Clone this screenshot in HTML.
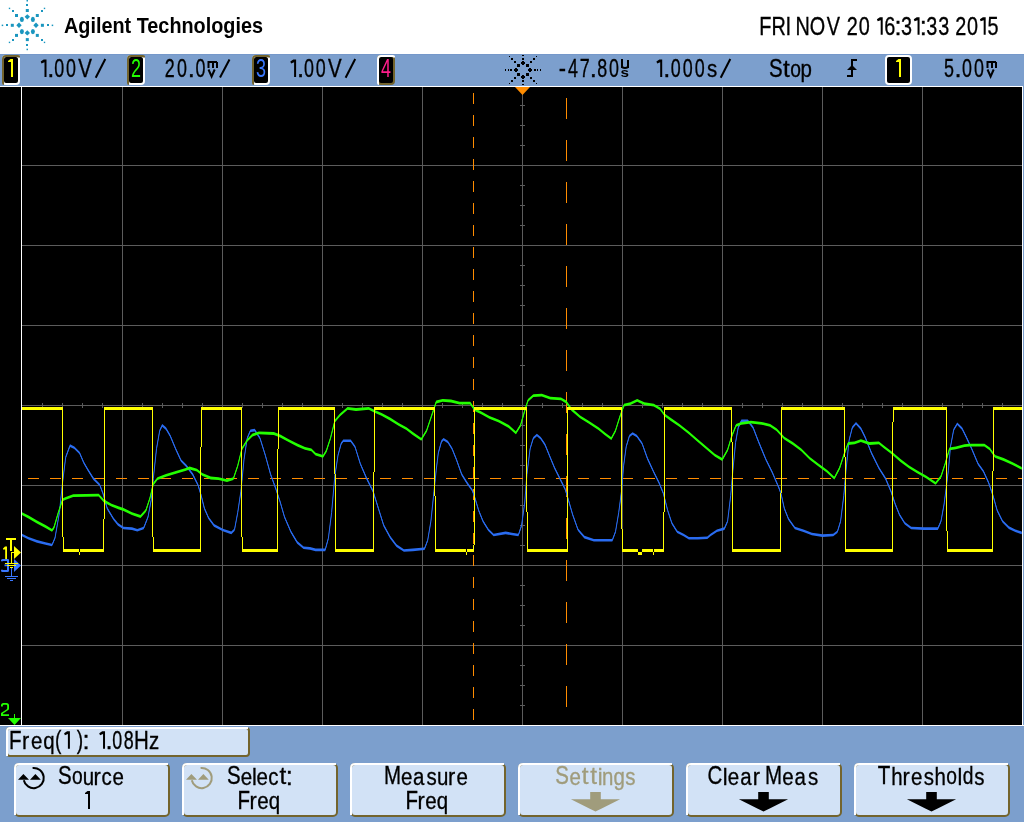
<!DOCTYPE html>
<html><head><meta charset="utf-8">
<style>
html,body{margin:0;padding:0;}
body{width:1024px;height:822px;position:relative;overflow:hidden;background:#7c9fcd;font-family:"Liberation Sans",sans-serif;}
svg{position:absolute;left:0;top:0;will-change:transform;}
text{font-family:"Liberation Sans",sans-serif;}
</style></head><body>
<svg width="1024" height="822" viewBox="0 0 1024 822">
 <!-- header -->
 <rect x="0" y="0" width="1024" height="54" fill="#fff"/>
 <g id="logo" fill="#1a96bf">
  <!-- vertical -->
  <rect x="26.5" y="0" width="1.5" height="1.5"/>
  <rect x="26" y="4" width="2" height="2"/>
  <rect x="25.8" y="9" width="3" height="3"/>
  <path d="M27.3 14.2L30 16.8L27.3 19.6L24.6 16.8Z"/>
  <path d="M27.3 30.2L30 32.9L27.3 35.6L24.6 32.9Z"/>
  <rect x="25.8" y="38.1" width="3" height="3"/>
  <rect x="26" y="44" width="2" height="2"/>
  <rect x="26.5" y="48.7" width="1.5" height="1.5"/>
  <!-- horizontal -->
  <path d="M16.3 25.3L19 22.6L21.7 25.3L19 28Z"/>
  <path d="M33.3 25.3L36 22.6L38.7 25.3L36 28Z"/>
  <rect x="10.8" y="23.8" width="3" height="3"/>
  <rect x="6" y="24" width="2" height="2"/>
  <rect x="1.7" y="24.6" width="1.5" height="1.5"/>
  <rect x="40.9" y="23.8" width="3" height="3"/>
  <rect x="47" y="24" width="2" height="2"/>
  <rect x="51.7" y="24.6" width="1.5" height="1.5"/>
  <!-- ovals -->
  <ellipse cx="21.9" cy="19.4" rx="2" ry="2.6"/>
  <ellipse cx="32.9" cy="19.4" rx="2" ry="2.6"/>
  <ellipse cx="21.9" cy="31.6" rx="2" ry="2.6"/>
  <ellipse cx="32.9" cy="31.6" rx="2" ry="2.6"/>
  <!-- diagonals -->
  <rect x="15" y="14" width="3" height="3"/><rect x="12" y="10" width="2" height="2"/><rect x="8.8" y="7.7" width="1.4" height="1.4"/>
  <rect x="35.8" y="14" width="3" height="3"/><rect x="41" y="10" width="2" height="2"/><rect x="43.8" y="7.7" width="1.4" height="1.4"/>
  <rect x="15" y="33.9" width="3" height="3"/><rect x="12" y="39" width="2" height="2"/><rect x="8.8" y="41.7" width="1.4" height="1.4"/>
  <rect x="35.8" y="33.9" width="3" height="3"/><rect x="41" y="39" width="2" height="2"/><rect x="43.8" y="41.7" width="1.4" height="1.4"/>
 </g>
 <text x="64" y="32.7" font-size="21.8" font-weight="bold" textLength="199" lengthAdjust="spacingAndGlyphs">Agilent Technologies</text>

 <!-- top bar -->
 <rect x="0" y="54" width="1024" height="32" fill="#7c9fcd"/>
 <rect x="0" y="54" width="1024" height="1" fill="#7598ca"/>
 <g id="topbar">
 <g stroke-width="2">
  <rect x="3" y="56" width="16" height="28" rx="3" fill="#000" stroke="#fff"/>
  <path d="M19 57.5 V56.5 Q19 56 18 56 H6 Q3 56 3 59 V83 Q3 84 4 84" fill="none" stroke="#73642d"/>
  <rect x="128" y="56" width="16" height="28" rx="3" fill="#000" stroke="#fff"/>
  <path d="M144 57.5 V56.5 Q144 56 143 56 H131 Q128 56 128 59 V83 Q128 84 129 84" fill="none" stroke="#73642d"/>
  <rect x="253" y="56" width="16" height="28" rx="3" fill="#000" stroke="#fff"/>
  <path d="M269 57.5 V56.5 Q269 56 268 56 H256 Q253 56 253 59 V83 Q253 84 254 84" fill="none" stroke="#73642d"/>
  <rect x="378" y="56" width="16" height="28" rx="3" fill="#000" stroke="#73642d"/>
  <path d="M394 57.5 V56.5 Q394 56 393 56 H381 Q378 56 378 59 V83 Q378 84 379 84" fill="none" stroke="#fff"/>
  <rect x="886" y="56" width="25" height="28" rx="3" fill="#000" stroke="#fff"/>
 </g>
 <path d="M8 61L10.5 59H13V77H11V62H8Z" fill="#ffff00"/>
 <text x="131" y="77" font-size="25" fill="#22ff00" textLength="10" lengthAdjust="spacingAndGlyphs">2</text>
 <text x="256" y="77" font-size="25" fill="#3a78ff" textLength="10" lengthAdjust="spacingAndGlyphs">3</text>
 <text x="381" y="77" font-size="25" fill="#ff1e8c" textLength="10" lengthAdjust="spacingAndGlyphs">4</text>
 <path d="M896 61L898.5 59H901V77H899V62H896Z" fill="#ffff00"/>
 <path d="M208.5 68V62H217M213 62V68M217 62V68" fill="none" stroke="#000" stroke-width="2"/>
 <path d="M208.5 69.5L211.6 76.5L214.7 69.5" fill="none" stroke="#000" stroke-width="2"/>
 <path d="M220 77.5L229.5 59.5" fill="none" stroke="#000" stroke-width="2"/>
 <path d="M622 59V68M622 66Q622 68 625 68Q628 68 628 66M628 60V68" fill="none" stroke="#000" stroke-width="2"/>
 <text x="620.5" y="77" font-size="13" font-weight="bold" textLength="8.5" lengthAdjust="spacingAndGlyphs">s</text>
 <path d="M987.5 68V62H996M992 62V68M996 62V68" fill="none" stroke="#000" stroke-width="2"/>
 <path d="M987.5 69.5L990.6 76.5L993.7 69.5" fill="none" stroke="#000" stroke-width="2"/>

 <g fill="#000">
  <path d="M851 59H857V61H853V77H847V75H851Z"/>
  <path d="M847 70H857L852 65Z"/>
 </g>
 <g id="trigstar" fill="#000" transform="translate(500,54)">
  <rect x="22" y="1" width="2" height="1"/>
  <rect x="22" y="4" width="2" height="2"/>
  <path d="M22 7H24V8H25V10H24V11H22V10H21V8H22Z"/>
  <path d="M22 21H24V22H25V24H24V25H22V24H21V22H22Z"/>
  <rect x="22" y="26" width="2" height="2"/>
  <rect x="22" y="30" width="2" height="1"/>
  <path d="M15 14H17V15H18V17H17V18H15V17H14V15H15Z"/>
  <path d="M29 14H31V15H32V17H31V18H29V17H28V15H29Z"/>
  <rect x="10" y="15" width="2" height="2"/>
  <rect x="8" y="15" width="1" height="2"/>
  <rect x="5" y="15" width="1" height="2"/>
  <rect x="34" y="15" width="2" height="2"/>
  <rect x="37" y="15" width="1" height="2"/>
  <rect x="40" y="15" width="1" height="2"/>
  <rect x="17" y="10" width="3" height="3"/>
  <rect x="26" y="10" width="3" height="3"/>
  <rect x="17" y="19" width="3" height="3"/>
  <rect x="26" y="19" width="3" height="3"/>
  <rect x="14" y="7" width="2" height="2"/>
  <rect x="30" y="7" width="2" height="2"/>
  <rect x="14" y="23" width="2" height="2"/>
  <rect x="30" y="23" width="2" height="2"/>
  <rect x="11" y="4" width="2" height="2"/>
  <rect x="33" y="4" width="2" height="2"/>
  <rect x="11" y="26" width="2" height="2"/>
  <rect x="33" y="26" width="2" height="2"/>
  <rect x="9" y="2" width="1" height="1"/>
  <rect x="36" y="2" width="1" height="1"/>
  <rect x="9" y="29" width="1" height="1"/>
  <rect x="36" y="29" width="1" height="1"/>
 </g>
<!--TT-->
</g>


 <!-- screen -->
 <rect x="0" y="86" width="1023" height="640" fill="#000"/>
 <g id="grid" stroke="#5c5c5c" stroke-width="1" shape-rendering="crispEdges">
  <path d="M122.5 87V725M222.5 87V725M322.5 87V725M422.5 87V725M522.5 87V725M622.5 87V725M722.5 87V725M822.5 87V725M922.5 87V725"/>
  <path d="M22 165.5H1022M22 245.5H1022M22 325.5H1022M22 405.5H1022M22 485.5H1022M22 565.5H1022M22 645.5H1022"/>
 </g>
 <g fill="#5c5c5c"><rect x="42" y="403" width="1" height="5"/><rect x="62" y="403" width="1" height="5"/><rect x="82" y="403" width="1" height="5"/><rect x="102" y="403" width="1" height="5"/><rect x="142" y="403" width="1" height="5"/><rect x="162" y="403" width="1" height="5"/><rect x="182" y="403" width="1" height="5"/><rect x="202" y="403" width="1" height="5"/><rect x="242" y="403" width="1" height="5"/><rect x="262" y="403" width="1" height="5"/><rect x="282" y="403" width="1" height="5"/><rect x="302" y="403" width="1" height="5"/><rect x="342" y="403" width="1" height="5"/><rect x="362" y="403" width="1" height="5"/><rect x="382" y="403" width="1" height="5"/><rect x="402" y="403" width="1" height="5"/><rect x="442" y="403" width="1" height="5"/><rect x="462" y="403" width="1" height="5"/><rect x="482" y="403" width="1" height="5"/><rect x="502" y="403" width="1" height="5"/><rect x="542" y="403" width="1" height="5"/><rect x="562" y="403" width="1" height="5"/><rect x="582" y="403" width="1" height="5"/><rect x="602" y="403" width="1" height="5"/><rect x="642" y="403" width="1" height="5"/><rect x="662" y="403" width="1" height="5"/><rect x="682" y="403" width="1" height="5"/><rect x="702" y="403" width="1" height="5"/><rect x="742" y="403" width="1" height="5"/><rect x="762" y="403" width="1" height="5"/><rect x="782" y="403" width="1" height="5"/><rect x="802" y="403" width="1" height="5"/><rect x="842" y="403" width="1" height="5"/><rect x="862" y="403" width="1" height="5"/><rect x="882" y="403" width="1" height="5"/><rect x="902" y="403" width="1" height="5"/><rect x="942" y="403" width="1" height="5"/><rect x="962" y="403" width="1" height="5"/><rect x="982" y="403" width="1" height="5"/><rect x="1002" y="403" width="1" height="5"/><rect x="520" y="105" width="5" height="1"/><rect x="520" y="125" width="5" height="1"/><rect x="520" y="145" width="5" height="1"/><rect x="520" y="185" width="5" height="1"/><rect x="520" y="205" width="5" height="1"/><rect x="520" y="225" width="5" height="1"/><rect x="520" y="265" width="5" height="1"/><rect x="520" y="285" width="5" height="1"/><rect x="520" y="305" width="5" height="1"/><rect x="520" y="345" width="5" height="1"/><rect x="520" y="365" width="5" height="1"/><rect x="520" y="385" width="5" height="1"/><rect x="520" y="425" width="5" height="1"/><rect x="520" y="445" width="5" height="1"/><rect x="520" y="465" width="5" height="1"/><rect x="520" y="505" width="5" height="1"/><rect x="520" y="525" width="5" height="1"/><rect x="520" y="545" width="5" height="1"/><rect x="520" y="585" width="5" height="1"/><rect x="520" y="605" width="5" height="1"/><rect x="520" y="625" width="5" height="1"/><rect x="520" y="665" width="5" height="1"/><rect x="520" y="685" width="5" height="1"/><rect x="520" y="705" width="5" height="1"/></g>
 <rect x="0" y="86" width="1023" height="1" fill="#fff"/>
 <rect x="0" y="725" width="1024" height="1" fill="#fff"/>
 <rect x="21" y="86" width="1" height="640" fill="#fff"/>
 <rect x="1022" y="86" width="1" height="640" fill="#fff"/>
 <g fill="#ff8c00"><rect x="473" y="93" width="1" height="11"/><rect x="473" y="115" width="1" height="11"/><rect x="473" y="137" width="1" height="11"/><rect x="473" y="159" width="1" height="11"/><rect x="473" y="181" width="1" height="11"/><rect x="473" y="203" width="1" height="11"/><rect x="473" y="225" width="1" height="11"/><rect x="473" y="247" width="1" height="11"/><rect x="473" y="269" width="1" height="11"/><rect x="473" y="291" width="1" height="11"/><rect x="473" y="313" width="1" height="11"/><rect x="473" y="335" width="1" height="11"/><rect x="473" y="357" width="1" height="11"/><rect x="473" y="379" width="1" height="11"/><rect x="473" y="401" width="1" height="11"/><rect x="473" y="423" width="1" height="11"/><rect x="473" y="445" width="1" height="11"/><rect x="473" y="467" width="1" height="11"/><rect x="473" y="489" width="1" height="11"/><rect x="473" y="511" width="1" height="11"/><rect x="473" y="533" width="1" height="11"/><rect x="473" y="555" width="1" height="11"/><rect x="473" y="577" width="1" height="11"/><rect x="473" y="599" width="1" height="11"/><rect x="473" y="621" width="1" height="11"/><rect x="473" y="643" width="1" height="11"/><rect x="473" y="665" width="1" height="11"/><rect x="473" y="687" width="1" height="11"/><rect x="473" y="709" width="1" height="11"/><rect x="566" y="98" width="1" height="21"/><rect x="566" y="140" width="1" height="21"/><rect x="566" y="182" width="1" height="21"/><rect x="566" y="224" width="1" height="21"/><rect x="566" y="266" width="1" height="21"/><rect x="566" y="308" width="1" height="21"/><rect x="566" y="350" width="1" height="21"/><rect x="566" y="392" width="1" height="21"/><rect x="566" y="434" width="1" height="21"/><rect x="566" y="476" width="1" height="21"/><rect x="566" y="518" width="1" height="21"/><rect x="566" y="560" width="1" height="21"/><rect x="566" y="602" width="1" height="21"/><rect x="566" y="644" width="1" height="21"/><rect x="566" y="686" width="1" height="21"/><rect x="28" y="478" width="11" height="1"/><rect x="50" y="478" width="11" height="1"/><rect x="72" y="478" width="11" height="1"/><rect x="94" y="478" width="11" height="1"/><rect x="116" y="478" width="11" height="1"/><rect x="138" y="478" width="11" height="1"/><rect x="160" y="478" width="11" height="1"/><rect x="182" y="478" width="11" height="1"/><rect x="204" y="478" width="11" height="1"/><rect x="226" y="478" width="11" height="1"/><rect x="248" y="478" width="11" height="1"/><rect x="270" y="478" width="11" height="1"/><rect x="292" y="478" width="11" height="1"/><rect x="314" y="478" width="11" height="1"/><rect x="336" y="478" width="11" height="1"/><rect x="358" y="478" width="11" height="1"/><rect x="380" y="478" width="11" height="1"/><rect x="402" y="478" width="11" height="1"/><rect x="424" y="478" width="11" height="1"/><rect x="446" y="478" width="11" height="1"/><rect x="468" y="478" width="11" height="1"/><rect x="490" y="478" width="11" height="1"/><rect x="512" y="478" width="11" height="1"/><rect x="534" y="478" width="11" height="1"/><rect x="556" y="478" width="11" height="1"/><rect x="578" y="478" width="11" height="1"/><rect x="600" y="478" width="11" height="1"/><rect x="622" y="478" width="11" height="1"/><rect x="644" y="478" width="11" height="1"/><rect x="666" y="478" width="11" height="1"/><rect x="688" y="478" width="11" height="1"/><rect x="710" y="478" width="11" height="1"/><rect x="732" y="478" width="11" height="1"/><rect x="754" y="478" width="11" height="1"/><rect x="776" y="478" width="11" height="1"/><rect x="798" y="478" width="11" height="1"/><rect x="820" y="478" width="11" height="1"/><rect x="842" y="478" width="11" height="1"/><rect x="864" y="478" width="11" height="1"/><rect x="886" y="478" width="11" height="1"/><rect x="908" y="478" width="11" height="1"/><rect x="930" y="478" width="11" height="1"/><rect x="952" y="478" width="11" height="1"/><rect x="974" y="478" width="11" height="1"/><rect x="996" y="478" width="11" height="1"/><rect x="1018" y="478" width="4" height="1"/><path d="M515 87H530L522.5 95Z"/></g>
 <polygon fill="#2a6cf0" points="22.0,533.7 28.5,536.9 37.0,540.1 45.5,542.2 52.0,543.7 55.0,536.7 59.4,511.4 62.5,481.6 65.7,456.0 70.0,444.3 74.3,446.5 79.6,451.7 83.8,461.4 88.0,468.7 93.4,477.3 99.8,483.7 103.0,492.2 107.2,507.1 113.6,517.7 118.0,523.1 123.5,526.7 132.0,527.3 137.3,529.0 143.7,526.7 148.0,515.7 151.2,498.7 153.3,477.3 156.5,447.5 159.7,429.4 162.2,424.1 166.0,427.3 170.3,434.7 175.6,447.5 181.0,459.2 186.3,464.6 192.7,473.1 198.0,483.7 201.2,494.3 204.4,507.1 208.6,516.7 214.0,524.1 222.8,528.7 231.3,531.6 234.5,528.4 237.7,511.4 240.9,490.1 244.0,458.2 247.2,436.9 250.4,429.4 254.7,428.8 260.0,436.9 265.3,453.9 270.6,473.1 276.0,488.0 280.2,500.7 284.5,515.7 290.9,530.5 297.2,541.1 303.6,546.5 310.0,547.1 315.6,548.6 325.2,548.6 328.4,536.9 331.6,511.4 334.8,475.2 338.0,453.9 341.2,442.2 343.3,439.4 350.7,439.4 355.0,445.4 360.3,462.4 366.7,477.3 373.1,490.1 378.4,507.1 383.7,524.1 390.1,535.8 396.5,544.3 403.9,549.2 412.8,548.6 424.5,547.5 427.7,539.0 430.9,519.9 434.0,490.1 436.2,468.8 438.3,451.7 441.5,440.1 443.6,438.0 447.9,440.7 452.1,447.5 456.4,458.2 461.7,473.1 467.0,481.6 472.3,489.0 475.5,498.6 478.7,509.2 483.0,519.9 488.3,528.4 493.6,533.7 505.6,531.6 512.0,532.7 518.4,533.7 521.6,524.1 524.8,500.7 526.9,473.1 530.1,447.5 533.3,436.9 536.9,433.7 540.7,436.9 545.0,443.3 549.3,453.9 554.6,466.7 559.9,477.3 565.2,488.0 568.4,498.6 572.7,513.5 578.0,528.4 584.4,535.8 593.9,539.0 612.3,539.0 615.5,530.5 618.7,511.4 621.5,490.1 623.6,464.6 626.2,445.4 629.4,434.7 632.6,432.2 636.8,434.7 642.1,442.2 647.4,457.1 653.8,470.9 659.1,481.6 663.4,492.2 667.7,509.2 671.9,522.0 677.2,530.5 683.6,533.7 688.9,536.9 697.8,536.9 707.3,536.5 710.5,533.7 716.9,529.4 724.4,527.3 727.6,519.9 730.7,494.3 732.9,468.8 735.6,441.1 738.2,426.3 741.4,419.4 747.8,419.4 753.1,426.3 758.4,440.1 765.9,458.2 772.2,470.9 778.6,485.8 781.0,492.2 784.3,507.1 788.5,517.7 794.9,526.7 803.4,529.4 811.9,532.7 822.6,534.3 833.2,533.7 837.4,530.5 840.6,519.9 843.8,494.3 846.0,468.8 849.1,439.0 852.3,426.3 856.0,422.0 860.9,427.3 865.1,435.8 871.5,451.8 878.9,466.7 885.6,477.3 891.0,490.1 895.2,502.8 899.5,513.5 904.8,522.0 911.2,526.7 923.9,527.3 937.8,527.3 941.0,519.9 944.1,502.8 946.3,485.8 948.4,468.8 950.5,445.4 953.7,428.4 957.3,422.4 962.1,427.3 966.3,435.8 971.7,447.5 978.0,462.4 983.4,469.9 988.7,481.6 993.0,494.3 997.2,509.2 1002.5,519.9 1008.9,526.3 1015.3,529.4 1021.7,531.6 1021.7,534.2 1015.3,532.0 1008.9,528.9 1002.5,522.5 997.2,511.8 993.0,496.9 988.7,484.2 983.4,472.5 978.0,465.0 971.7,450.1 966.3,438.4 962.1,429.9 957.3,425.0 953.7,431.0 950.5,448.0 948.4,471.4 946.3,488.4 944.1,505.4 941.0,522.5 937.8,529.9 923.9,529.9 911.2,529.3 904.8,524.6 899.5,516.1 895.2,505.4 891.0,492.7 885.6,479.9 878.9,469.3 871.5,454.4 865.1,438.4 860.9,429.9 856.0,424.6 852.3,428.9 849.1,441.6 846.0,471.4 843.8,496.9 840.6,522.5 837.4,533.1 833.2,536.3 822.6,536.9 811.9,535.3 803.4,532.0 794.9,529.3 788.5,520.3 784.3,509.7 781.0,494.8 778.6,488.4 772.2,473.5 765.9,460.8 758.4,442.7 753.1,428.9 747.8,422.0 741.4,422.0 738.2,428.9 735.6,443.7 732.9,471.4 730.7,496.9 727.6,522.5 724.4,529.9 716.9,532.0 710.5,536.3 707.3,539.1 697.8,539.5 688.9,539.5 683.6,536.3 677.2,533.1 671.9,524.6 667.7,511.8 663.4,494.8 659.1,484.2 653.8,473.5 647.4,459.7 642.1,444.8 636.8,437.3 632.6,434.8 629.4,437.3 626.2,448.0 623.6,467.2 621.5,492.7 618.7,514.0 615.5,533.1 612.3,541.6 593.9,541.6 584.4,538.4 578.0,531.0 572.7,516.1 568.4,501.2 565.2,490.6 559.9,479.9 554.6,469.3 549.3,456.5 545.0,445.9 540.7,439.5 536.9,436.3 533.3,439.5 530.1,450.1 526.9,475.7 524.8,503.3 521.6,526.7 518.4,536.3 512.0,535.3 505.6,534.2 493.6,536.3 488.3,531.0 483.0,522.5 478.7,511.8 475.5,501.2 472.3,491.6 467.0,484.2 461.7,475.7 456.4,460.8 452.1,450.1 447.9,443.3 443.6,440.6 441.5,442.7 438.3,454.3 436.2,471.4 434.0,492.7 430.9,522.5 427.7,541.6 424.5,550.1 412.8,551.2 403.9,551.8 396.5,546.9 390.1,538.4 383.7,526.7 378.4,509.7 373.1,492.7 366.7,479.9 360.3,465.0 355.0,448.0 350.7,442.0 343.3,442.0 341.2,444.8 338.0,456.5 334.8,477.8 331.6,514.0 328.4,539.5 325.2,551.2 315.6,551.2 310.0,549.7 303.6,549.1 297.2,543.7 290.9,533.1 284.5,518.3 280.2,503.3 276.0,490.6 270.6,475.7 265.3,456.5 260.0,439.5 254.7,431.4 250.4,432.0 247.2,439.5 244.0,460.8 240.9,492.7 237.7,514.0 234.5,531.0 231.3,534.2 222.8,531.3 214.0,526.7 208.6,519.3 204.4,509.7 201.2,496.9 198.0,486.3 192.7,475.7 186.3,467.2 181.0,461.8 175.6,450.1 170.3,437.3 166.0,429.9 162.2,426.7 159.7,432.0 156.5,450.1 153.3,479.9 151.2,501.3 148.0,518.3 143.7,529.3 137.3,531.6 132.0,529.9 123.5,529.3 118.0,525.7 113.6,520.3 107.2,509.7 103.0,494.8 99.8,486.3 93.4,479.9 88.0,471.3 83.8,464.0 79.6,454.3 74.3,449.1 70.0,446.9 65.7,458.6 62.5,484.2 59.4,514.0 55.0,539.3 52.0,546.3 45.5,544.8 37.0,542.7 28.5,539.5 22.0,536.3"/><polyline fill="none" stroke="#2a6cf0" stroke-width="1.0" stroke-linejoin="round" points="22.0,535.0 28.5,538.2 37.0,541.4 45.5,543.5 52.0,545.0 55.0,538.0 59.4,512.7 62.5,482.9 65.7,457.3 70.0,445.6 74.3,447.8 79.6,453.0 83.8,462.7 88.0,470.0 93.4,478.6 99.8,485.0 103.0,493.5 107.2,508.4 113.6,519.0 118.0,524.4 123.5,528.0 132.0,528.6 137.3,530.3 143.7,528.0 148.0,517.0 151.2,500.0 153.3,478.6 156.5,448.8 159.7,430.7 162.2,425.4 166.0,428.6 170.3,436.0 175.6,448.8 181.0,460.5 186.3,465.9 192.7,474.4 198.0,485.0 201.2,495.6 204.4,508.4 208.6,518.0 214.0,525.4 222.8,530.0 231.3,532.9 234.5,529.7 237.7,512.7 240.9,491.4 244.0,459.5 247.2,438.2 250.4,430.7 254.7,430.1 260.0,438.2 265.3,455.2 270.6,474.4 276.0,489.3 280.2,502.0 284.5,517.0 290.9,531.8 297.2,542.4 303.6,547.8 310.0,548.4 315.6,549.9 325.2,549.9 328.4,538.2 331.6,512.7 334.8,476.5 338.0,455.2 341.2,443.5 343.3,440.7 350.7,440.7 355.0,446.7 360.3,463.7 366.7,478.6 373.1,491.4 378.4,508.4 383.7,525.4 390.1,537.1 396.5,545.6 403.9,550.5 412.8,549.9 424.5,548.8 427.7,540.3 430.9,521.2 434.0,491.4 436.2,470.1 438.3,453.0 441.5,441.4 443.6,439.3 447.9,442.0 452.1,448.8 456.4,459.5 461.7,474.4 467.0,482.9 472.3,490.3 475.5,499.9 478.7,510.5 483.0,521.2 488.3,529.7 493.6,535.0 505.6,532.9 512.0,534.0 518.4,535.0 521.6,525.4 524.8,502.0 526.9,474.4 530.1,448.8 533.3,438.2 536.9,435.0 540.7,438.2 545.0,444.6 549.3,455.2 554.6,468.0 559.9,478.6 565.2,489.3 568.4,499.9 572.7,514.8 578.0,529.7 584.4,537.1 593.9,540.3 612.3,540.3 615.5,531.8 618.7,512.7 621.5,491.4 623.6,465.9 626.2,446.7 629.4,436.0 632.6,433.5 636.8,436.0 642.1,443.5 647.4,458.4 653.8,472.2 659.1,482.9 663.4,493.5 667.7,510.5 671.9,523.3 677.2,531.8 683.6,535.0 688.9,538.2 697.8,538.2 707.3,537.8 710.5,535.0 716.9,530.7 724.4,528.6 727.6,521.2 730.7,495.6 732.9,470.1 735.6,442.4 738.2,427.6 741.4,420.7 747.8,420.7 753.1,427.6 758.4,441.4 765.9,459.5 772.2,472.2 778.6,487.1 781.0,493.5 784.3,508.4 788.5,519.0 794.9,528.0 803.4,530.7 811.9,534.0 822.6,535.6 833.2,535.0 837.4,531.8 840.6,521.2 843.8,495.6 846.0,470.1 849.1,440.3 852.3,427.6 856.0,423.3 860.9,428.6 865.1,437.1 871.5,453.1 878.9,468.0 885.6,478.6 891.0,491.4 895.2,504.1 899.5,514.8 904.8,523.3 911.2,528.0 923.9,528.6 937.8,528.6 941.0,521.2 944.1,504.1 946.3,487.1 948.4,470.1 950.5,446.7 953.7,429.7 957.3,423.7 962.1,428.6 966.3,437.1 971.7,448.8 978.0,463.7 983.4,471.2 988.7,482.9 993.0,495.6 997.2,510.5 1002.5,521.2 1008.9,527.6 1015.3,530.7 1021.7,532.9"/>
<polygon fill="#24ff00" points="22.0,512.3 28.5,515.6 37.0,520.6 45.5,525.1 52.0,528.9 54.0,526.1 58.3,511.3 62.5,498.5 65.7,497.0 73.2,494.2 98.7,493.8 104.0,499.6 111.5,503.8 119.0,506.6 123.5,508.1 132.0,512.3 140.5,515.1 145.9,509.1 150.0,496.4 153.3,482.6 157.5,477.2 166.0,474.0 176.7,470.8 185.2,468.3 189.5,466.6 196.9,468.7 202.2,473.0 210.7,476.6 218.5,477.2 227.0,479.3 233.4,477.2 237.7,464.5 241.9,447.4 247.2,438.9 252.5,433.6 258.9,431.5 273.8,432.1 280.2,434.6 288.7,439.3 297.2,443.6 305.0,447.0 311.4,448.5 315.6,452.7 323.0,454.9 326.3,449.6 330.5,436.8 334.8,419.8 340.1,413.4 347.6,407.0 356.0,408.1 368.8,407.0 375.2,410.2 381.6,413.0 390.1,417.6 398.6,423.0 406.4,427.2 412.8,432.1 421.3,437.9 426.6,429.3 431.9,413.4 436.2,400.6 442.6,398.9 451.0,399.6 459.6,401.7 470.2,401.7 474.5,408.1 480.9,411.3 489.4,415.9 498.9,419.8 508.8,425.1 515.9,431.5 520.5,424.0 524.8,409.1 528.0,398.9 533.3,394.2 541.8,393.8 550.3,396.8 561.0,397.4 566.3,400.6 571.6,408.1 580.1,415.5 588.6,420.8 598.5,427.2 604.9,432.5 611.3,437.2 615.5,429.3 619.8,415.5 624.0,403.8 630.4,402.3 637.2,398.9 644.3,402.3 653.8,403.8 660.2,407.4 664.5,413.4 670.9,418.1 679.4,424.0 688.9,431.5 697.8,439.3 706.3,446.4 714.8,453.8 722.2,458.1 727.6,448.5 731.8,434.6 736.1,424.0 741.4,421.9 751.0,420.8 761.6,421.9 770.1,424.0 776.5,428.3 784.3,436.8 792.8,442.1 801.3,448.5 809.8,457.0 818.3,463.4 826.8,469.8 834.3,476.8 839.6,466.6 843.8,453.8 848.1,442.1 854.5,441.5 860.9,439.3 869.4,442.1 878.9,441.5 883.5,445.3 892.0,451.7 900.5,459.1 909.0,465.5 917.6,470.8 926.0,475.5 935.6,481.9 941.0,475.1 945.2,462.3 949.5,447.4 955.9,446.4 964.4,444.2 969.5,443.8 984.4,443.8 989.7,447.4 995.0,454.9 1003.6,458.1 1012.1,461.9 1021.7,467.0 1021.7,469.8 1012.1,464.7 1003.6,460.9 995.0,457.7 989.7,450.2 984.4,446.6 969.5,446.6 964.4,447.0 955.9,449.2 949.5,450.2 945.2,465.1 941.0,477.9 935.6,484.7 926.0,478.3 917.6,473.6 909.0,468.3 900.5,461.9 892.0,454.5 883.5,448.1 878.9,444.3 869.4,444.9 860.9,442.1 854.5,444.3 848.1,444.9 843.8,456.6 839.6,469.4 834.3,479.6 826.8,472.6 818.3,466.2 809.8,459.8 801.3,451.3 792.8,444.9 784.3,439.6 776.5,431.1 770.1,426.8 761.6,424.7 751.0,423.6 741.4,424.7 736.1,426.8 731.8,437.4 727.6,451.3 722.2,460.9 714.8,456.6 706.3,449.2 697.8,442.1 688.9,434.3 679.4,426.8 670.9,420.9 664.5,416.2 660.2,410.2 653.8,406.6 644.3,405.1 637.2,401.7 630.4,405.1 624.0,406.6 619.8,418.3 615.5,432.1 611.3,440.0 604.9,435.3 598.5,430.0 588.6,423.6 580.1,418.3 571.6,410.9 566.3,403.4 561.0,400.2 550.3,399.6 541.8,396.6 533.3,397.0 528.0,401.7 524.8,411.9 520.5,426.8 515.9,434.3 508.8,427.9 498.9,422.6 489.4,418.7 480.9,414.1 474.5,410.9 470.2,404.5 459.6,404.5 451.0,402.4 442.6,401.7 436.2,403.4 431.9,416.2 426.6,432.1 421.3,440.7 412.8,434.9 406.4,430.0 398.6,425.8 390.1,420.4 381.6,415.8 375.2,413.0 368.8,409.8 356.0,410.9 347.6,409.8 340.1,416.2 334.8,422.6 330.5,439.6 326.3,452.4 323.0,457.7 315.6,455.5 311.4,451.3 305.0,449.8 297.2,446.4 288.7,442.1 280.2,437.4 273.8,434.9 258.9,434.3 252.5,436.4 247.2,441.7 241.9,450.2 237.7,467.3 233.4,480.0 227.0,482.1 218.5,480.0 210.7,479.4 202.2,475.8 196.9,471.5 189.5,469.4 185.2,471.1 176.7,473.6 166.0,476.8 157.5,480.0 153.3,485.4 150.0,499.2 145.9,511.9 140.5,517.9 132.0,515.1 123.5,510.9 119.0,509.4 111.5,506.6 104.0,502.4 98.7,496.6 73.2,497.0 65.7,499.8 62.5,501.3 58.3,514.1 54.0,528.9 52.0,531.7 45.5,527.9 37.0,523.4 28.5,518.4 22.0,515.1"/><polyline fill="none" stroke="#24ff00" stroke-width="1.1" stroke-linejoin="round" points="22.0,513.7 28.5,517.0 37.0,522.0 45.5,526.5 52.0,530.3 54.0,527.5 58.3,512.7 62.5,499.9 65.7,498.4 73.2,495.6 98.7,495.2 104.0,501.0 111.5,505.2 119.0,508.0 123.5,509.5 132.0,513.7 140.5,516.5 145.9,510.5 150.0,497.8 153.3,484.0 157.5,478.6 166.0,475.4 176.7,472.2 185.2,469.7 189.5,468.0 196.9,470.1 202.2,474.4 210.7,478.0 218.5,478.6 227.0,480.7 233.4,478.6 237.7,465.9 241.9,448.8 247.2,440.3 252.5,435.0 258.9,432.9 273.8,433.5 280.2,436.0 288.7,440.7 297.2,445.0 305.0,448.4 311.4,449.9 315.6,454.1 323.0,456.3 326.3,451.0 330.5,438.2 334.8,421.2 340.1,414.8 347.6,408.4 356.0,409.5 368.8,408.4 375.2,411.6 381.6,414.4 390.1,419.0 398.6,424.4 406.4,428.6 412.8,433.5 421.3,439.3 426.6,430.7 431.9,414.8 436.2,402.0 442.6,400.3 451.0,401.0 459.6,403.1 470.2,403.1 474.5,409.5 480.9,412.7 489.4,417.3 498.9,421.2 508.8,426.5 515.9,432.9 520.5,425.4 524.8,410.5 528.0,400.3 533.3,395.6 541.8,395.2 550.3,398.2 561.0,398.8 566.3,402.0 571.6,409.5 580.1,416.9 588.6,422.2 598.5,428.6 604.9,433.9 611.3,438.6 615.5,430.7 619.8,416.9 624.0,405.2 630.4,403.7 637.2,400.3 644.3,403.7 653.8,405.2 660.2,408.8 664.5,414.8 670.9,419.5 679.4,425.4 688.9,432.9 697.8,440.7 706.3,447.8 714.8,455.2 722.2,459.5 727.6,449.9 731.8,436.0 736.1,425.4 741.4,423.3 751.0,422.2 761.6,423.3 770.1,425.4 776.5,429.7 784.3,438.2 792.8,443.5 801.3,449.9 809.8,458.4 818.3,464.8 826.8,471.2 834.3,478.2 839.6,468.0 843.8,455.2 848.1,443.5 854.5,442.9 860.9,440.7 869.4,443.5 878.9,442.9 883.5,446.7 892.0,453.1 900.5,460.5 909.0,466.9 917.6,472.2 926.0,476.9 935.6,483.3 941.0,476.5 945.2,463.7 949.5,448.8 955.9,447.8 964.4,445.6 969.5,445.2 984.4,445.2 989.7,448.8 995.0,456.3 1003.6,459.5 1012.1,463.3 1021.7,468.4"/>
<g fill="#ffff00"><rect x="22" y="407" width="41" height="3"/><rect x="62" y="407" width="1" height="130"/><rect x="63" y="537" width="1" height="15"/><rect x="63" y="549" width="41" height="3"/><rect x="104" y="407" width="1" height="112"/><rect x="103" y="519" width="1" height="33"/><rect x="104" y="407" width="49" height="3"/><rect x="152" y="407" width="1" height="130"/><rect x="153" y="537" width="1" height="15"/><rect x="153" y="549" width="48" height="3"/><rect x="201" y="407" width="1" height="40"/><rect x="200" y="447" width="1" height="105"/><rect x="201" y="407" width="41" height="3"/><rect x="241" y="407" width="1" height="130"/><rect x="242" y="537" width="1" height="15"/><rect x="242" y="549" width="36" height="3"/><rect x="278" y="407" width="1" height="42"/><rect x="277" y="449" width="1" height="103"/><rect x="278" y="407" width="57" height="3"/><rect x="334" y="407" width="1" height="67"/><rect x="335" y="474" width="1" height="78"/><rect x="335" y="549" width="39" height="3"/><rect x="374" y="407" width="1" height="65"/><rect x="373" y="472" width="1" height="80"/><rect x="374" y="407" width="61" height="3"/><rect x="434" y="407" width="1" height="89"/><rect x="435" y="496" width="1" height="56"/><rect x="435" y="549" width="39" height="3"/><rect x="474" y="407" width="1" height="138"/><rect x="473" y="545" width="1" height="7"/><rect x="474" y="407" width="53" height="3"/><rect x="526" y="407" width="1" height="105"/><rect x="527" y="512" width="1" height="40"/><rect x="527" y="549" width="41" height="3"/><rect x="567" y="407" width="1" height="73"/><rect x="567" y="480" width="1" height="72"/><rect x="567" y="407" width="55" height="3"/><rect x="621" y="407" width="1" height="122"/><rect x="622" y="529" width="1" height="23"/><rect x="622" y="549" width="42" height="3"/><rect x="664" y="407" width="1" height="105"/><rect x="663" y="512" width="1" height="40"/><rect x="664" y="407" width="68" height="3"/><rect x="731" y="407" width="1" height="35"/><rect x="732" y="442" width="1" height="110"/><rect x="732" y="549" width="49" height="3"/><rect x="781" y="407" width="1" height="86"/><rect x="780" y="493" width="1" height="59"/><rect x="781" y="407" width="64" height="3"/><rect x="844" y="407" width="1" height="50"/><rect x="845" y="457" width="1" height="95"/><rect x="845" y="549" width="48" height="3"/><rect x="893" y="407" width="1" height="15"/><rect x="892" y="422" width="1" height="130"/><rect x="893" y="407" width="54" height="3"/><rect x="946" y="407" width="1" height="124"/><rect x="947" y="531" width="1" height="21"/><rect x="947" y="549" width="46" height="3"/><rect x="993" y="407" width="1" height="64"/><rect x="992" y="471" width="1" height="81"/><rect x="993" y="407" width="29" height="3"/></g><rect x="79" y="549" width="1" height="3" fill="#000"/><rect x="79" y="552" width="1" height="3" fill="#ffff00"/><rect x="466" y="549" width="1" height="3" fill="#000"/><rect x="466" y="552" width="1" height="3" fill="#ffff00"/><rect x="638" y="549" width="4" height="3" fill="#000"/><rect x="638" y="552" width="4" height="3" fill="#ffff00"/><rect x="653" y="549" width="1" height="3" fill="#000"/><rect x="653" y="552" width="1" height="3" fill="#ffff00"/>

 <g id="markers">
 <g fill="#3a78ff">
  <path d="M14 559L21 565.5L14 572Z"/>
  <rect x="11" y="568" width="1" height="8"/>
  <rect x="5" y="576" width="13" height="1"/>
  <rect x="7" y="578" width="9" height="1"/>
  <rect x="10" y="580" width="3" height="1"/>
  <path d="M1 560.5Q1 559 2.5 559H8Q9 559 9 560V570.5Q9 572 7.5 572H2.5Q1 572 1 570.5V569.8H3V570H7V566.3H4.5V564.5H7V561H3V561.3H1Z"/>
 </g>
 <g fill="#ffff00">
  <rect x="6" y="538" width="10" height="2"/>
  <rect x="10" y="538" width="2" height="13"/>
  <path d="M14 546L21 552.5L14 559Z"/>
  <rect x="11" y="552" width="3" height="1"/>
  <rect x="11" y="552" width="1" height="11"/>
  <rect x="5" y="563" width="13" height="1"/>
  <rect x="7" y="565" width="9" height="1"/>
  <rect x="10" y="567" width="3" height="1"/>
  <path d="M3 548.5L5 546.5H7V559H5.2V549.5H3Z"/>
 </g>
 <g fill="#22ff00">
  <path d="M1 705.5Q1 703 3.5 703H6.5Q9 703 9 705.5V708.5Q9 710 7.5 710.5L3 713.5V714.3H9V716H1V713L6.5 709.5Q7.2 709 7.2 708.2V705.8Q7.2 704.8 6.2 704.8H3.8Q2.8 704.8 2.8 705.8V706.5H1Z"/>
  <rect x="14" y="714" width="1" height="6"/>
  <path d="M8 718H21L14.5 725Z"/>
 </g>
</g>


 <!-- bottom -->
 <rect x="0" y="726" width="1024" height="1" fill="#7598ca"/>
 <g id="bottom">
 <g stroke-width="2">
  <rect x="7" y="728" width="242" height="28" rx="3" fill="#d2e2f6" stroke="#73642d"/>
  <path d="M7 756V731Q7 728 10 728H248" fill="none" stroke="#fff"/>
 </g>
 
 <rect x="15" y="764" width="154" height="52" rx="4" fill="#d2e2f6" stroke="#73642d" stroke-width="2"/><path d="M15 815V768Q15 764 19 764H168" fill="none" stroke="#fff" stroke-width="2"/><rect x="183" y="764" width="154" height="52" rx="4" fill="#d2e2f6" stroke="#73642d" stroke-width="2"/><path d="M183 815V768Q183 764 187 764H336" fill="none" stroke="#fff" stroke-width="2"/><rect x="351" y="764" width="154" height="52" rx="4" fill="#d2e2f6" stroke="#73642d" stroke-width="2"/><path d="M351 815V768Q351 764 355 764H504" fill="none" stroke="#fff" stroke-width="2"/><rect x="519" y="764" width="154" height="52" rx="4" fill="#d2e2f6" stroke="#73642d" stroke-width="2"/><path d="M519 815V768Q519 764 523 764H672" fill="none" stroke="#fff" stroke-width="2"/><rect x="687" y="764" width="154" height="52" rx="4" fill="#d2e2f6" stroke="#73642d" stroke-width="2"/><path d="M687 815V768Q687 764 691 764H840" fill="none" stroke="#fff" stroke-width="2"/><rect x="855" y="764" width="154" height="52" rx="4" fill="#d2e2f6" stroke="#73642d" stroke-width="2"/><path d="M855 815V768Q855 764 859 764H1008" fill="none" stroke="#fff" stroke-width="2"/><path d="M85 793L87.5 791H90V809H88V794H85Z" fill="#000"/><g transform="translate(0,0)"><path d="M32.6 768A10.1 10.1 0 1 1 23.8 780.2" fill="none" stroke="#000" stroke-width="2"/><path d="M18 779.7H29L23.4 774Z M30 779.7H40.8L35.4 774Z" fill="#000"/></g><g transform="translate(168,0)"><path d="M32.6 768A10.1 10.1 0 1 1 23.8 780.2" fill="none" stroke="#a09c7c" stroke-width="2"/><path d="M18 779.7H29L23.4 774Z M30 779.7H40.8L35.4 774Z" fill="#a09c7c"/></g><path d="M590.2 792H600.8V799.3H620.1L595.5 811.6L570.9 799.3H590.2Z" fill="#a09c7c"/><path d="M758.2 792H768.8V799.3H788.1L763.5 811.6L738.9 799.3H758.2Z" fill="#000"/><path d="M926.2 792H936.8V799.3H956.1L931.5 811.6L906.9 799.3H926.2Z" fill="#000"/>
</g>

<path d="M40.70 61.39L43.70 59.39H46.50V77.00H44.50V62.19L41.50 63.39Z" fill="#000"/><path d="M95.70 77.80L105.30 58.99" stroke="#000" stroke-width="2" fill="none"/><text transform="scale(1.0,1.0)" x="47.23" y="77.00" font-size="25.6" fill="#000" stroke="#000" stroke-width="0.35">.</text><text transform="scale(0.7,1.0)" x="77.68 94.31" y="77.00" font-size="25.6" fill="#000" stroke="#000" stroke-width="0.35">00</text><text transform="scale(0.8,1.0)" x="97.82" y="77.00" font-size="25.6" fill="#000" stroke="#000" stroke-width="0.35">V</text><text transform="scale(0.7,1.0)" x="235.43 252.79 279.33" y="77.00" font-size="25.6" fill="#000" stroke="#000" stroke-width="0.35">200</text><text transform="scale(1.0,1.0)" x="187.67" y="77.00" font-size="25.6" fill="#000" stroke="#000" stroke-width="0.35">.</text><path d="M290.30 61.39L293.30 59.39H296.10V77.00H294.10V62.19L291.10 63.39Z" fill="#000"/><path d="M345.60 77.80L355.20 58.99" stroke="#000" stroke-width="2" fill="none"/><text transform="scale(1.0,1.0)" x="296.89" y="77.00" font-size="25.6" fill="#000" stroke="#000" stroke-width="0.35">.</text><text transform="scale(0.7,1.0)" x="434.43 451.13" y="77.00" font-size="25.6" fill="#000" stroke="#000" stroke-width="0.35">00</text><text transform="scale(0.8,1.0)" x="410.13" y="77.00" font-size="25.6" fill="#000" stroke="#000" stroke-width="0.35">V</text><text transform="scale(0.85,1.0)" x="657.33" y="77.00" font-size="25.6" fill="#000" stroke="#000" stroke-width="0.35">-</text><text transform="scale(0.7,1.0)" x="811.34 828.29 853.15 870.05" y="77.00" font-size="25.6" fill="#000" stroke="#000" stroke-width="0.35">4780</text><text transform="scale(1.0,1.0)" x="589.87" y="77.00" font-size="25.6" fill="#000" stroke="#000" stroke-width="0.35">.</text><path d="M656.40 61.39L659.40 59.39H662.20V77.00H660.20V62.19L657.20 63.39Z" fill="#000"/><path d="M720.70 77.80L730.30 58.99" stroke="#000" stroke-width="2" fill="none"/><text transform="scale(1.0,1.0)" x="663.30" y="77.00" font-size="25.6" fill="#000" stroke="#000" stroke-width="0.35">.</text><text transform="scale(0.7,1.0)" x="958.31 975.46 992.61" y="77.00" font-size="25.6" fill="#000" stroke="#000" stroke-width="0.35">000</text><text transform="scale(0.8,0.91)" x="883.70" y="84.62" font-size="25.6" fill="#000" stroke="#000" stroke-width="0.35">s</text><text transform="scale(0.8,1.0)" x="961.21" y="77.00" font-size="25.6" fill="#000" stroke="#000" stroke-width="0.35">S</text><text transform="scale(0.95,0.91)" x="824.17" y="84.62" font-size="25.6" fill="#000" stroke="#000" stroke-width="0.35">t</text><text transform="scale(0.75,0.91)" x="1053.84" y="84.62" font-size="25.6" fill="#000" stroke="#000" stroke-width="0.35">o</text><text transform="scale(0.8,0.91)" x="1000.71" y="84.62" font-size="25.6" fill="#000" stroke="#000" stroke-width="0.35">p</text><text transform="scale(0.7,1.0)" x="1348.55 1374.32 1391.62" y="77.00" font-size="25.6" fill="#000" stroke="#000" stroke-width="0.35">500</text><text transform="scale(1.0,1.0)" x="954.40" y="77.00" font-size="25.6" fill="#000" stroke="#000" stroke-width="0.35">.</text><path d="M876.90 19.33L879.90 17.33H882.70V34.80H880.70V20.13L877.70 21.33Z" fill="#000"/><path d="M913.75 19.33L916.75 17.33H919.55V34.80H917.55V20.13L914.55 21.33Z" fill="#000"/><path d="M979.88 19.33L982.88 17.33H985.68V34.80H983.68V20.13L980.68 21.33Z" fill="#000"/><text transform="scale(0.78,1.0)" x="973.30 988.95 1019.96 1038.27 1059.93 1085.74 1100.84 1133.61 1155.23 1187.52 1202.80 1224.79 1239.89 1265.91" y="34.80" font-size="25.4" fill="#000" stroke="#000" stroke-width="0.35">FRNOV206333205</text><text transform="scale(0.8,1.0)" x="981.78" y="34.80" font-size="25.4" fill="#000" stroke="#000" stroke-width="0.35">I</text><text transform="scale(1.0,1.0)" x="894.57 919.76" y="34.80" font-size="25.4" fill="#000" stroke="#000" stroke-width="0.35">::</text><path d="M64.10 733.19L67.10 731.19H69.90V748.80H67.90V733.99L64.90 735.19Z" fill="#000"/><path d="M99.23 733.19L102.23 731.19H105.03V748.80H103.03V733.99L100.03 735.19Z" fill="#000"/><text transform="scale(0.8,1.0)" x="11.27 167.48" y="748.80" font-size="25.6" fill="#000" stroke="#000" stroke-width="0.35">FH</text><text transform="scale(0.85,0.91)" x="25.97" y="822.86" font-size="25.6" fill="#000" stroke="#000" stroke-width="0.35">r</text><text transform="scale(0.8,0.91)" x="38.61 54.15 186.35" y="822.86" font-size="25.6" fill="#000" stroke="#000" stroke-width="0.35">eqz</text><text transform="scale(0.75,1.0)" x="73.35 102.38" y="748.80" font-size="25.6" fill="#000" stroke="#000" stroke-width="0.35">()</text><text transform="scale(1.0,1.0)" x="82.46 105.50" y="748.80" font-size="25.6" fill="#000" stroke="#000" stroke-width="0.35">:.</text><text transform="scale(0.7,1.0)" x="160.54 176.67" y="748.80" font-size="25.6" fill="#000" stroke="#000" stroke-width="0.35">08</text><text transform="scale(0.8,1.0)" x="72.46" y="784.50" font-size="25.6" fill="#000" stroke="#000" stroke-width="0.35">S</text><text transform="scale(0.75,0.91)" x="96.02" y="862.09" font-size="25.6" fill="#000" stroke="#000" stroke-width="0.35">o</text><text transform="scale(0.8,0.91)" x="103.36 126.95 140.65" y="862.09" font-size="25.6" fill="#000" stroke="#000" stroke-width="0.35">uce</text><text transform="scale(0.85,0.91)" x="109.89" y="862.09" font-size="25.6" fill="#000" stroke="#000" stroke-width="0.35">r</text><text transform="scale(0.8,1.0)" x="283.71" y="784.50" font-size="25.6" fill="#000" stroke="#000" stroke-width="0.35">S</text><text transform="scale(0.8,0.91)" x="301.09 320.62 335.19" y="862.09" font-size="25.6" fill="#000" stroke="#000" stroke-width="0.35">eec</text><text transform="scale(0.85,0.91)" x="296.39" y="862.09" font-size="25.6" fill="#000" stroke="#000" stroke-width="0.35">l</text><text transform="scale(0.95,0.91)" x="294.25" y="862.09" font-size="25.6" fill="#000" stroke="#000" stroke-width="0.35">t</text><text transform="scale(1.0,1.0)" x="285.82" y="784.50" font-size="25.6" fill="#000" stroke="#000" stroke-width="0.35">:</text><text transform="scale(0.8,1.0)" x="297.02" y="808.60" font-size="25.6" fill="#000" stroke="#000" stroke-width="0.35">F</text><text transform="scale(0.85,0.91)" x="293.65" y="888.57" font-size="25.6" fill="#000" stroke="#000" stroke-width="0.35">r</text><text transform="scale(0.8,0.91)" x="321.70 335.90" y="888.57" font-size="25.6" fill="#000" stroke="#000" stroke-width="0.35">eq</text><text transform="scale(0.8,1.0)" x="480.15" y="784.50" font-size="25.6" fill="#000" stroke="#000" stroke-width="0.35">M</text><text transform="scale(0.8,0.91)" x="501.35 516.42 533.01 546.28 570.65" y="862.09" font-size="25.6" fill="#000" stroke="#000" stroke-width="0.35">easue</text><text transform="scale(0.85,0.91)" x="527.13" y="862.09" font-size="25.6" fill="#000" stroke="#000" stroke-width="0.35">r</text><text transform="scale(0.8,1.0)" x="507.02" y="808.60" font-size="25.6" fill="#000" stroke="#000" stroke-width="0.35">F</text><text transform="scale(0.85,0.91)" x="491.30" y="888.57" font-size="25.6" fill="#000" stroke="#000" stroke-width="0.35">r</text><text transform="scale(0.8,0.91)" x="531.70 545.90" y="888.57" font-size="25.6" fill="#000" stroke="#000" stroke-width="0.35">eq</text><text transform="scale(0.8,1.0)" x="694.21" y="784.50" font-size="25.6" fill="#a09c7c" stroke="#a09c7c" stroke-width="0.35">S</text><text transform="scale(0.8,0.91)" x="711.85 752.47 766.80 781.50" y="862.09" font-size="25.6" fill="#a09c7c" stroke="#a09c7c" stroke-width="0.35">engs</text><text transform="scale(0.95,0.91)" x="612.48 621.39" y="862.09" font-size="25.6" fill="#a09c7c" stroke="#a09c7c" stroke-width="0.35">tt</text><text transform="scale(0.85,0.91)" x="703.19" y="862.09" font-size="25.6" fill="#a09c7c" stroke="#a09c7c" stroke-width="0.35">i</text><text transform="scale(0.8,1.0)" x="884.33 956.26" y="784.50" font-size="25.6" fill="#000" stroke="#000" stroke-width="0.35">CM</text><text transform="scale(0.85,0.91)" x="850.22 885.65" y="862.09" font-size="25.6" fill="#000" stroke="#000" stroke-width="0.35">lr</text><text transform="scale(0.8,0.91)" x="909.85 925.22 977.75 993.12 1010.00" y="862.09" font-size="25.6" fill="#000" stroke="#000" stroke-width="0.35">eaeas</text><text transform="scale(0.8,1.0)" x="1097.30" y="784.50" font-size="25.6" fill="#000" stroke="#000" stroke-width="0.35">T</text><text transform="scale(0.8,0.91)" x="1113.91 1138.87 1154.59 1168.03 1217.75" y="862.09" font-size="25.6" fill="#000" stroke="#000" stroke-width="0.35">heshs</text><text transform="scale(0.85,0.91)" x="1061.66 1126.38" y="862.09" font-size="25.6" fill="#000" stroke="#000" stroke-width="0.35">rl</text><text transform="scale(0.75,0.91)" x="1261.79 1283.55" y="862.09" font-size="25.6" fill="#000" stroke="#000" stroke-width="0.35">od</text>
</svg>
</body></html>
